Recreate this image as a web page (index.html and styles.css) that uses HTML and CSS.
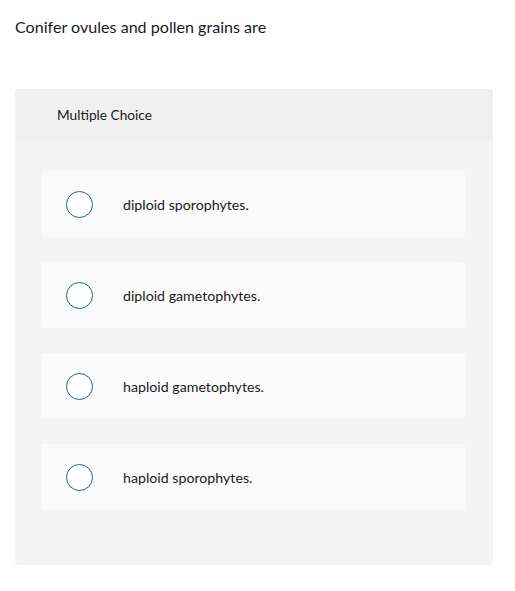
FILE: index.html
```html
<!DOCTYPE html>
<html>
<head>
<meta charset="utf-8">
<link rel="stylesheet" href="styles.css">
</head>
<body>
<div class="page">
  <p class="question">Conifer ovules and pollen grains are</p>
  <div class="card">
    <div class="card-header">Multiple Choice</div>
    <div class="card-body">
      <div class="option"><span class="radio"></span><span class="label">diploid sporophytes.</span></div>
      <div class="option"><span class="radio"></span><span class="label">diploid gametophytes.</span></div>
      <div class="option"><span class="radio"></span><span class="label">haploid gametophytes.</span></div>
      <div class="option"><span class="radio"></span><span class="label">haploid sporophytes.</span></div>
    </div>
  </div>
</div>
</body>
</html>
```
FILE: styles.css
```css
html, body {
  margin: 0;
  padding: 0;
  background: #ffffff;
}
body {
  font-family: "Lato", "Open Sans", sans-serif;
  color: #1a1a1a;
}
.page {
  padding: 17px 22px 0 15px;
}
.question {
  margin: 0;
  font-size: 16.1px;
  line-height: 20px;
}
.card {
  margin-top: 52px;
  width: 478px;
  border-radius: 3px;
  background: #f4f4f4;
  overflow: hidden;
}
.card-header {
  height: 50px;
  background: #f0f0f0;
  display: flex;
  align-items: center;
  padding-left: 42px;
  font-size: 13.7px;
}
.card-body {
  padding: 32px 28px 55px 26px;
  display: flex;
  flex-direction: column;
  gap: 25px;
}
.option {
  height: 66px;
  background: #fafafa;
  border-radius: 3px;
  display: flex;
  align-items: center;
  padding-left: 25px;
}
.radio {
  width: 25px;
  height: 25px;
  border: 1.5px solid #1f5f99;
  border-radius: 50%;
  background: #ffffff;
  flex: none;
}
.label {
  margin-left: 30px;
  font-size: 14.2px;
}
```
